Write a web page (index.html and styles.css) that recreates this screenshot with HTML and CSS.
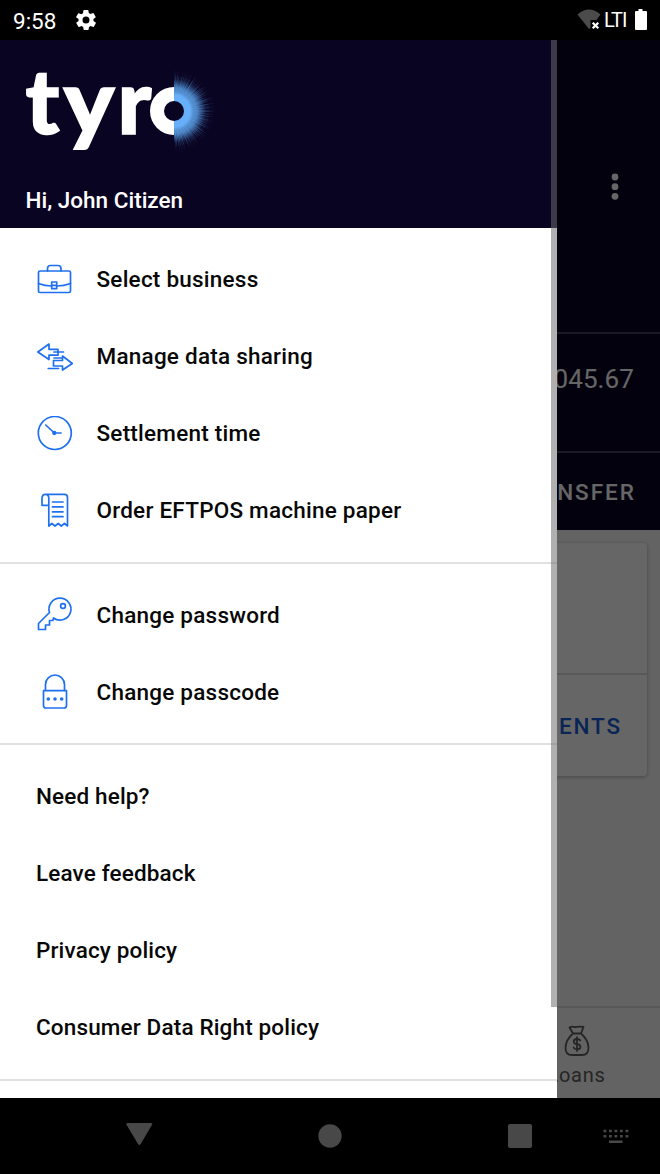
FILE: index.html
```html
<!DOCTYPE html>
<html lang="en">
<head>
<meta charset="utf-8">
<title>Tyro</title>
<link rel="stylesheet" href="styles.css">
</head>
<body>
<div class="screen">
  <header class="status">
    <span class="status-time">9:58</span>
    <svg class="status-gear" width="24" height="24" viewBox="0 0 24 24"><path fill="#fff" fill-rule="evenodd" d="M19.4 13a7.800 7.800 0 0 0 0-2l2.100-1.600a.5.5 0 0 0 .1-.6l-2-3.500a.5.5 0 0 0-.6-.2l-2.500 1a7.300 7.300 0 0 0-1.700-1l-.4-2.600a.5.5 0 0 0-.5-.4h-4a.5.5 0 0 0-.5.400l-.4 2.700a7.300 7.300 0 0 0-1.700 1l-2.500-1a.5.5 0 0 0-.6.2l-2 3.400a.5.5 0 0 0 .1.600L4.600 11a7.800 7.800 0 0 0 0 2l-2.100 1.600a.5.5 0 0 0-.1.600l2 3.500c.1.200.4.300.6.200l2.500-1a7.300 7.300 0 0 0 1.700 1l.4 2.600c0 .3.200.5.5.5h4c.300 0 .5-.2.500-.5l.4-2.600a7.300 7.300 0 0 0 1.700-1l2.500 1c.2.100.5 0 .6-.2l2-3.500a.5.5 0 0 0-.1-.6zM12 15.500a3.500 3.500 0 1 1 0-7 3.500 3.500 0 0 1 0 7z"/></svg>
    <span class="spacer"></span>
    <svg width="24" height="22" viewBox="0 0 24 22"><path fill="#4b4b4b" d="M.5 5.500Q12-4.500 23.500 5.500L19.500 11H13.500v8l-1.500 1z"/><path stroke="#fff" stroke-width="2.200" d="M15.700 13.700l5.600 5.600m0-5.600l-5.600 5.600"/></svg>
    <span class="status-net">LTI</span>
    <svg class="status-battery" width="14" height="22" viewBox="0 0 14 22"><path fill="#fff" d="M4.500 0h4v2h3.500q1 0 1 1v17q0 1-1 1H2q-1 0-1-1V3q0-1 1-1h2.500z"/></svg>
  </header>

  <main class="app">
    <section class="account">
      <div class="account-top">
        <svg width="8" height="28" viewBox="0 0 8 28" fill="#fff"><circle cx="4" cy="4" r="3.400"/><circle cx="4" cy="13.700" r="3.400"/><circle cx="4" cy="23.300" r="3.400"/></svg>
      </div>
      <div class="account-balance">045.67</div>
      <div class="account-action">TRANSFER</div>
    </section>
    <section class="feed">
      <div class="card">
        <div class="card-body"></div>
        <div class="card-action">PAYMENTS</div>
      </div>
    </section>
    <nav class="tabs">
      <div class="tab">
        <svg width="26" height="32" viewBox="0 0 26 32" fill="none" stroke="#5c5c5c" stroke-width="1.800" stroke-linejoin="round" stroke-linecap="round"><path d="M9 8.500L5.500 2.500Q8 1 11 2.200Q15 1 19.500 2L17 8.500zM9 8.500C5 12 1.500 18 1.500 23Q1.500 30 8 30H18Q24.500 30 24.500 23C24.500 18 21 12 17 8.500"/><path d="M16.200 15.500Q15.500 14 13 14Q9.800 14 9.800 16.500Q9.800 19 13 19.200Q16.400 19.500 16.400 22Q16.400 24.300 13 24.300Q10.300 24.300 9.600 22.500M13 12.200V26"/></svg>
        <span>Loans</span>
      </div>
    </nav>
    <div class="scrim"></div>

    <aside class="drawer">
      <div class="drawer-head">
        <svg class="logo" width="210" height="100" viewBox="14 64 210 100">
          <defs>
            <clipPath id="right"><rect x="174" y="60" width="50" height="100"/></clipPath>
            <radialGradient id="glow" gradientUnits="userSpaceOnUse" cx="174" cy="111" r="32"><stop offset=".5" stop-color="#67b0f9"/><stop offset=".75" stop-color="#569ae0" stop-opacity=".7"/><stop offset="1" stop-color="#3878bd" stop-opacity="0"/></radialGradient>
            <radialGradient id="rays" gradientUnits="userSpaceOnUse" cx="174" cy="111" r="41"><stop offset=".45" stop-color="#6ab3fb" stop-opacity=".8"/><stop offset=".7" stop-color="#5a9fe6" stop-opacity=".5"/><stop offset="1" stop-color="#4c8fd6" stop-opacity="0"/></radialGradient>
          </defs>
          <text class="logo-text" y="134"><tspan x="25.500">t</tspan><tspan x="63.500" textLength="51" lengthAdjust="spacingAndGlyphs">y</tspan><tspan x="117.500">r</tspan></text>
          <path fill="#fff" d="M174 87v48a24 24 0 0 1 0-48z"/>
          <g clip-path="url(#right)" fill="none" stroke="url(#rays)">
            <circle cx="174" cy="111" r="32" fill="url(#glow)" stroke="none"/>
            <circle cx="174" cy="111" r="28" stroke-width="14" stroke-dasharray=".5 .9 .7 .6 .4 1.100 .8 .7" opacity=".55"/>
            <circle cx="174" cy="111" r="31" stroke-width="20" stroke-dasharray=".5 2.100 .6 1.500 .4 3.300 .7 1.200" opacity=".6"/>
            <circle cx="174" cy="111" r="32" stroke-width="24" stroke-dasharray=".5 4.100 .4 2.700 .6 6.300" opacity=".6"/>
          </g>
          <circle cx="174" cy="111" r="10" fill="#0a0423"/>
        </svg>
        <div class="greeting">Hi, John Citizen</div>
      </div>
      <ul class="menu">
        <li><svg class="icon" viewBox="0 0 38 38"><rect x="2.500" y="9" width="32" height="21.500" rx="1.500"/><path d="M11.500 9V6.500Q11.500 3.500 14.500 3.500H22Q25 3.500 25 6.500V9M2.500 21.500Q9 24 15.500 24M21 24Q28 24 34.500 21.500M15.700 20h5v6.600h-5zM15.700 23.300h5"/></svg>Select business</li>
        <li><svg class="icon" viewBox="0 0 38 38"><path d="M21.800 10.300H13V5L1.800 13L13 20.500V16.200H22V10.300M17.500 10.300H22M18 13H27.500M18 19H25M17.500 21.500H26.500V17L36.300 24.500L26.500 31V27H17.500zM12.300 29.500H22.500"/></svg>Manage data sharing</li>
        <li><svg class="icon" viewBox="0 0 38 38"><circle cx="18.800" cy="17" r="16.500"/><path d="M9.800 9L18.300 17H25"/><circle cx="18.300" cy="17" r="1.300" fill="#1f70ee"/></svg>Settlement time</li>
        <li><svg class="icon" viewBox="0 0 38 38"><path d="M12.800 33V5.500Q12.800 1.300 9.500 1.300Q6 1.300 6 5.500V12.300H12.800M9.500 1.300H28.500Q31.500 1.300 31.500 4.500V33L28.500 30.500L25.300 33L22.200 30.500L19 33L15.900 30.500L12.800 33M16.500 9H27M16.500 13.900H27M16.500 18.800H27M16.500 23.700H27"/></svg>Order EFTPOS machine paper</li>
      </ul>
      <ul class="menu">
        <li><svg class="icon" viewBox="0 0 38 38"><path d="M13.500 15.500A11 11 0 1 1 17.500 21L16.800 23.500H13.500V28H9.500V32.500H2.500V26.500z"/><circle cx="27" cy="9" r="2.400"/></svg>Change password</li>
        <li><svg class="icon" viewBox="0 0 38 38"><path d="M7.500 16.700H30.500V31.500Q30.500 34 28 34H10Q7.500 34 7.500 31.500zM9.500 16.700V10.500A9.500 9.500 0 0 1 28.500 10.500V16.700"/><g fill="#1f70ee" stroke="none"><circle cx="12.300" cy="25" r="1.800"/><circle cx="19" cy="25" r="1.800"/><circle cx="25.700" cy="25" r="1.800"/></g></svg>Change passcode</li>
      </ul>
      <ul class="menu menu-plain">
        <li>Need help?</li>
        <li>Leave feedback</li>
        <li>Privacy policy</li>
        <li>Consumer Data Right policy</li>
      </ul>
      <div class="scrollbar"></div>
    </aside>
  </main>

  <footer class="navbar">
    <svg width="660" height="76" viewBox="0 0 660 76" fill="#484848"><path d="M128 25H151Q153 25 152 26.700L140.700 46Q139.300 48 138 46L126.500 26.700Q125.500 25 128 25z"/><circle cx="330" cy="38" r="11.700"/><rect x="508" y="26" width="24" height="24" rx="2"/><path d="M603.500 33H629M603.500 38.300H629" fill="none" stroke="#484848" stroke-width="2.600" stroke-dasharray="2.800 2.700"/><rect x="609" y="42.500" width="13.500" height="2.500"/></svg>
  </footer>
</div>
</body>
</html>
```
FILE: styles.css
```css
* { box-sizing: border-box; }
body { margin: 0; background: #000; font-family: Roboto, "Noto Sans", sans-serif; }
.screen { display: flex; flex-direction: column; width: 660px; height: 1174px; overflow: hidden; }

.status { height: 40px; flex: none; display: flex; align-items: center; padding: 0 12px 0 13px; color: #fff; font-size: 22.500px; }
.status-time { width: 60.500px; padding-top: 2px; }
.spacer { flex: 1; }
.status-net { font-size: 20px; width: 24px; margin: 0 6px 0 3px; letter-spacing: -1px; }

.app { position: relative; height: 1058px; flex: none; display: flex; flex-direction: column; background: #f8f8f8; }
.account { height: 490px; flex: none; display: flex; flex-direction: column; background: #0a0423; color: #fff; text-align: right; }
.account-top { height: 294px; padding: 133px 41px 0 0; border-bottom: 2px solid #45405a; }
.account-top svg { display: block; margin-left: auto; }
.account-balance { height: 119px; padding: 29px 26px 0 0; font-size: 26px; line-height: 32px; letter-spacing: .1px; border-bottom: 2px solid #45405a; }
.account-action { flex: 1; padding: 25px 24px 0 0; font-size: 22.500px; line-height: 28px; font-weight: 500; letter-spacing: 2px; }
.feed { flex: 1; padding: 13px 13px 0; }
.card { height: 233px; background: #fff; border-radius: 4px; box-shadow: 0 1px 4px rgba(0,0,0,.3); }
.card-body { height: 132px; border-bottom: 2px solid #dedede; }
.card-action { padding: 36px 25px 0 0; text-align: right; color: #175dd4; font-size: 22.500px; line-height: 30px; font-weight: 500; letter-spacing: 1.900px; }
.tabs { height: 92px; flex: none; display: flex; justify-content: flex-end; border-top: 2px solid #dcdcdc; }
.tab { width: 167px; display: flex; flex-direction: column; align-items: center; padding-top: 17px; color: #5c5c5c; font-size: 20px; letter-spacing: .7px; line-height: 24px; }
.tab svg { margin-bottom: 6px; }
.scrim { position: absolute; inset: 0; background: rgba(0,0,0,.6); }

.drawer { position: absolute; top: 0; left: 0; width: 557px; height: 1058px; background: #fff; overflow: hidden; }
.drawer-head { height: 188px; background: #0a0423; padding: 24px 14px 0; }
.logo { display: block; overflow: visible; }
.logo-text { font-family: Lato, sans-serif; font-weight: 900; font-size: 90px; fill: #fff; stroke: #fff; stroke-width: 1.500px; }
.greeting { padding-left: 11.500px; margin-top: 21px; color: #fff; font-size: 22.500px; line-height: 30px; font-weight: 500; }
.menu { list-style: none; margin: 0; padding: 14px 0 11.500px; border-bottom: 2px solid #e0e0e0; }
.menu li { height: 77px; display: flex; align-items: center; padding: 0 0 3px 36px; color: #080808; font-size: 22.500px; font-weight: 500; letter-spacing: .23px; }
.menu-plain li { letter-spacing: .15px; }
.icon { width: 38px; height: 38px; margin: 3px 22.500px 0 0; fill: none; stroke: #1f70ee; stroke-width: 1.700; stroke-linecap: round; stroke-linejoin: round; }
.scrollbar { position: absolute; top: 0; right: 0; width: 6.500px; height: 966.500px; background: rgba(106,106,106,.53); }

.navbar { height: 76px; background: #000; }
.navbar svg { display: block; }
```
